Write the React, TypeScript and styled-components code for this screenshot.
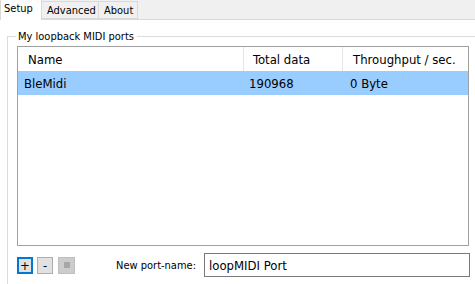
import styled, { createGlobalStyle } from "styled-components";

const Global = createGlobalStyle`
  html, body {
    margin: 0;
    padding: 0;
    background: #ffffff;
    overflow: hidden;
  }
  body {
    font-family: "DejaVu Sans Condensed", "DejaVu Sans", sans-serif;
    font-size: 11px;
    color: #000000;
  }
`;

const Window = styled.div`
  width: 475px;
  height: 284px;
  overflow: hidden;
  background: #ffffff;
`;

const TabBar = styled.div`
  display: flex;
  align-items: flex-end;
  height: 20px;
  box-sizing: border-box;
  background: #f0f0f0;
  border-bottom: 1px solid #d9d9d9;
`;

const Tab = styled.div<{ $active?: boolean; $width: number }>`
  box-sizing: border-box;
  width: ${(p) => p.$width}px;
  height: ${(p) => (p.$active ? 21 : 18)}px;
  margin-bottom: ${(p) => (p.$active ? -1 : 0)}px;
  padding-left: ${(p) => (p.$active ? 3 : 5)}px;
  display: flex;
  align-items: center;
  background: ${(p) => (p.$active ? "#ffffff" : "#f0f0f0")};
  border: 1px solid #d9d9d9;
  border-bottom: ${(p) => (p.$active ? "none" : "1px solid #d9d9d9")};
  border-left: ${(p) => (p.$active ? "1px solid #d9d9d9" : "none")};
  font-size: 11px;
  line-height: 13px;
  padding-bottom: ${(p) => (p.$active ? 4 : 0)}px;
`;

const Panel = styled.div`
  padding: 10px 0 0 7px;
`;

const GroupBox = styled.fieldset`
  margin: 0;
  width: 480px;
  height: 300px;
  box-sizing: border-box;
  border: 1px solid #dcdcdc;
  padding: 3px 0 0 9px;
  min-width: 0;
`;

const Legend = styled.legend`
  margin-left: -1px;
  padding: 0 3px 0 2px;
  font-size: 11px;
  line-height: 13px;
  color: #000000;
`;

const ListBox = styled.div`
  box-sizing: border-box;
  width: 452px;
  height: 200px;
  border: 1px solid #a0a0a0;
  background: #ffffff;
`;

const Row = styled.div<{ $selected?: boolean }>`
  display: grid;
  grid-template-columns: 226px 99px 1fr;
  height: 24px;
  background: ${(p) => (p.$selected ? "#99ccff" : "transparent")};
  font-size: 13px;
`;

const HeadCell = styled.div<{ $pad: number; $last?: boolean }>`
  display: flex;
  align-items: center;
  padding-left: ${(p) => p.$pad}px;
  border-right: ${(p) => (p.$last ? "none" : "1px solid #e5e5e5")};
  white-space: nowrap;
`;

const Cell = styled.div<{ $pad: number }>`
  display: flex;
  align-items: center;
  padding-left: ${(p) => p.$pad}px;
  white-space: nowrap;
`;

const Footer = styled.div`
  display: flex;
  align-items: center;
  margin-top: 7px;
  height: 24px;
`;

const SmallButton = styled.div<{ $focused?: boolean; $disabled?: boolean }>`
  box-sizing: border-box;
  width: ${(p) => (p.$disabled ? 17 : 16)}px;
  height: 17px;
  margin-right: ${(p) => (p.$focused ? 4 : 5)}px;
  display: flex;
  align-items: center;
  justify-content: center;
  background: ${(p) => (p.$disabled ? "#cccccc" : "#e1e1e1")};
  border: ${(p) =>
    p.$focused
      ? "2px solid #0078d7"
      : p.$disabled
      ? "1px solid #bfbfbf"
      : "1px solid #adadad"};
  font-size: 13px;
  line-height: 13px;
`;

const Square = styled.div`
  width: 6px;
  height: 6px;
  background: #a6a6a6;
`;

const PortLabel = styled.div`
  flex: 0 0 auto;
  width: 117px;
  text-align: right;
  font-size: 11px;
  margin-left: -1px;
`;

const NameInput = styled.div`
  box-sizing: border-box;
  flex: 0 0 auto;
  width: 266px;
  height: 24px;
  margin-left: 8px;
  padding-left: 4px;
  display: flex;
  align-items: center;
  border: 1px solid #7a7a7a;
  font-size: 13px;
  background: #ffffff;
`;

const tabs = [
  { label: "Setup", width: 42, active: true },
  { label: "Advanced", width: 57 },
  { label: "About", width: 39 },
];

export default function App() {
  return (
    <Window>
      <Global />
      <TabBar>
        {tabs.map((t) => (
          <Tab key={t.label} $active={t.active} $width={t.width}>
            {t.label}
          </Tab>
        ))}
      </TabBar>
      <Panel>
        <GroupBox>
          <Legend>My loopback MIDI ports</Legend>
          <ListBox>
            <Row>
              <HeadCell $pad={10}>Name</HeadCell>
              <HeadCell $pad={9}>Total data</HeadCell>
              <HeadCell $pad={10} $last>
                Throughput / sec.
              </HeadCell>
            </Row>
            <Row $selected>
              <Cell $pad={6}>BleMidi</Cell>
              <Cell $pad={5}>190968</Cell>
              <Cell $pad={7}>0 Byte</Cell>
            </Row>
          </ListBox>
          <Footer>
            <SmallButton $focused>+</SmallButton>
            <SmallButton>-</SmallButton>
            <SmallButton $disabled>
              <Square />
            </SmallButton>
            <PortLabel>New port-name:</PortLabel>
            <NameInput>loopMIDI Port</NameInput>
          </Footer>
        </GroupBox>
      </Panel>
    </Window>
  );
}
